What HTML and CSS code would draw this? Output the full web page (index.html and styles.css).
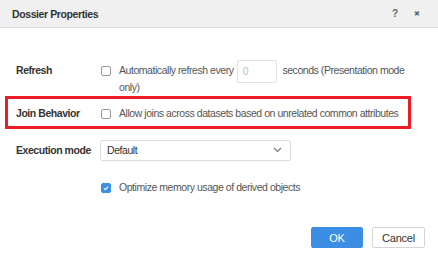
FILE: index.html
```html
<!DOCTYPE html>
<html>
<head>
<meta charset="utf-8">
<link rel="stylesheet" href="styles.css">
</head>
<body>
<div class="dialog">
  <div class="header">
    <span class="title">Dossier Properties</span>
    <span class="hicons"><span class="help">?</span><span class="close">&#x2716;</span></span>
  </div>
  <div class="body">
    <div class="row refresh">
      <div class="label">Refresh</div>
      <div class="ctrl">
        <span class="cb"></span>
        <div class="text">Automatically refresh every <span class="num">0</span> seconds (Presentation mode only)</div>
      </div>
    </div>
    <div class="row join">
      <div class="label">Join Behavior</div>
      <div class="ctrl">
        <span class="cb"></span>
        <div class="text">Allow joins across datasets based on unrelated common attributes</div>
      </div>
    </div>
    <div class="row exec">
      <div class="label">Execution mode</div>
      <div class="select"><span>Default</span>
        <svg width="9" height="6" viewBox="0 0 9 6"><path d="M1 1 L4.5 4.5 L8 1" fill="none" stroke="#777" stroke-width="1.1"/></svg>
      </div>
    </div>
    <div class="row opt">
      <div class="label"></div>
      <div class="ctrl">
        <span class="cb checked"><svg width="10" height="10" viewBox="0 0 10 10"><path d="M2.3 5.2 L4.2 7 L7.8 3.2" fill="none" stroke="#fff" stroke-width="1.4"/></svg></span>
        <div class="text">Optimize memory usage of derived objects</div>
      </div>
    </div>
  </div>
  <div class="footer">
    <button class="btn ok">OK</button>
    <button class="btn cancel">Cancel</button>
  </div>
</div>
</body>
</html>
```
FILE: styles.css
```css
html, body { margin: 0; padding: 0; background: #fff; }
body { font-family: "Liberation Sans", Arial, sans-serif; font-size: 10.5px; letter-spacing: -0.45px; color: #444; }
.dialog { width: 438px; height: 265px; position: relative; }
.header {
  height: 27px; background: #f0f0f0; border-bottom: 1px solid #dcdcdc;
  display: flex; align-items: center; justify-content: space-between;
  padding: 0 18px 0 12px;
}
.title { font-weight: bold; color: #333; letter-spacing: -0.4px; }
.hicons { display: flex; align-items: center; gap: 16px; color: #666; letter-spacing: 0; }
.help { font-weight: bold; font-size: 10px; }
.close { font-size: 7px; }
.body { padding-top: 34px; }
.row { display: flex; align-items: flex-start; }
.label { width: 84px; flex: none; font-weight: bold; color: #333; line-height: 16px; padding-left: 16px; white-space: nowrap; box-sizing: content-box; }
.ctrl { display: flex; align-items: flex-start; }
.cb {
  width: 10px; height: 10px; border: 1px solid #999; border-radius: 2px;
  box-sizing: border-box; flex: none; margin: 4px 8px 0 1px; background: #fff;
  display: flex; align-items: center; justify-content: center;
}
.cb.checked { background: #3b8ee3; border-color: #3b8ee3; }
.text { line-height: 16px; color: #555; }
.refresh .text { width: 292px; }
.num {
  display: inline-block; width: 40px; height: 23px; box-sizing: border-box;
  border: 1px solid #e2e2e2; border-radius: 2px; color: #bbb; font-size: 10px;
  line-height: 21px; padding-left: 5px; vertical-align: middle; margin: -4px 3px -4px 1px;
}
.join {
  margin: 1px 0 0 5px; width: 406px; height: 33px; box-sizing: border-box;
  border: 3px solid #ee1c25; padding-top: 6px;
}
.join .label { padding-left: 8px; width: 84px; }
.exec { margin-top: 11px; align-items: center; }
.select {
  width: 191px; height: 21px; box-sizing: border-box; border: 1px solid #dedede; border-radius: 2px;
  display: flex; align-items: center; justify-content: space-between; padding: 0 8px 0 6px; color: #333;
}
.opt { margin-top: 18px; }
.footer { position: absolute; right: 13px; top: 227px; display: flex; gap: 9px; }
.btn {
  font-family: "Liberation Sans", Arial, sans-serif; font-size: 11px; height: 21px; width: 52px;
  border-radius: 2px; box-sizing: border-box; padding: 0; letter-spacing: -0.2px;
}
.ok { background: #3b8ee3; border: 1px solid #3b8ee3; color: #fff; }
.cancel { background: #fff; border: 1px solid #d4d4d4; color: #333; width: 53px; }
```
